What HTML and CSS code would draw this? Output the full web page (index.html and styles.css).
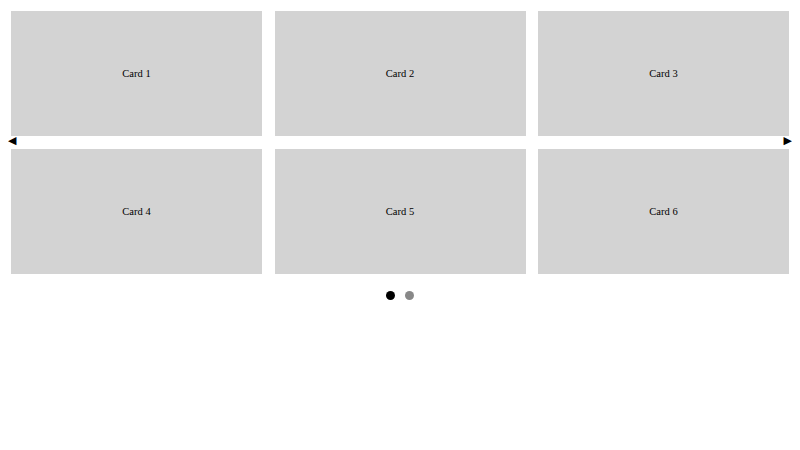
FILE: index.html
```html
<!DOCTYPE html>
<html lang="en">
<head>
    <meta charset="UTF-8">
    <meta name="viewport" content="width=device-width, initial-scale=1.0">
    <title>Card Carousel</title>
    <link rel="stylesheet" href="styles.css">
</head>
<body>
    <div class="carousel">
        <button class="arrow prev" onclick="move(-1)">&#9664;</button>
        <div class="slide" id="slide">
            <div class="card">Card 1</div>
            <div class="card">Card 2</div>
            <div class="card">Card 3</div>
            <div class="card">Card 4</div>
            <div class="card">Card 5</div>
            <div class="card">Card 6</div>
        </div>
        <button class="arrow next" onclick="move(1)">&#9654;</button>
    </div>
    <div class="dots">
        <span class="dot active"></span>
        <span class="dot"></span>
    </div>
    <script>
        let page = 0;
        const pages = 2;
        function move(step) {
            page = (page + step + pages) % pages;
            const cards = document.querySelectorAll(".card");
            cards.forEach(function (card, i) {
                card.textContent = "Card " + (page * 6 + i + 1);
            });
            document.querySelectorAll(".dot").forEach(function (dot, i) {
                dot.classList.toggle("active", i === page);
            });
        }
    </script>
</body>
</html>
```

FILE: styles.css
```css
body {
    margin: 8px;
    font-family: "Liberation Serif", serif;
    background: #fff;
}

.carousel {
    position: relative;
}

.slide {
    display: grid;
    grid-template-columns: repeat(3, 1fr);
    grid-template-rows: 125px 125px;
    column-gap: 12.5px;
    row-gap: 13px;
    padding: 3px;
}

.card {
    background: #d3d3d3;
    display: flex;
    align-items: center;
    justify-content: center;
    font-size: 10.5px;
    color: #000;
}

.arrow {
    position: absolute;
    top: calc(50% - 3px);
    transform: translateY(-50%);
    background: none;
    border: none;
    padding: 0;
    font-size: 11px;
    line-height: 1;
    color: #000;
    cursor: pointer;
    font-family: "DejaVu Sans", sans-serif;
}

.prev {
    left: 0;
}

.next {
    right: 0;
}

.dots {
    display: flex;
    justify-content: center;
    gap: 10px;
    margin-top: 14px;
}

.dot {
    width: 9px;
    height: 9px;
    border-radius: 50%;
    background: #888;
}

.dot.active {
    background: #000;
}
```
